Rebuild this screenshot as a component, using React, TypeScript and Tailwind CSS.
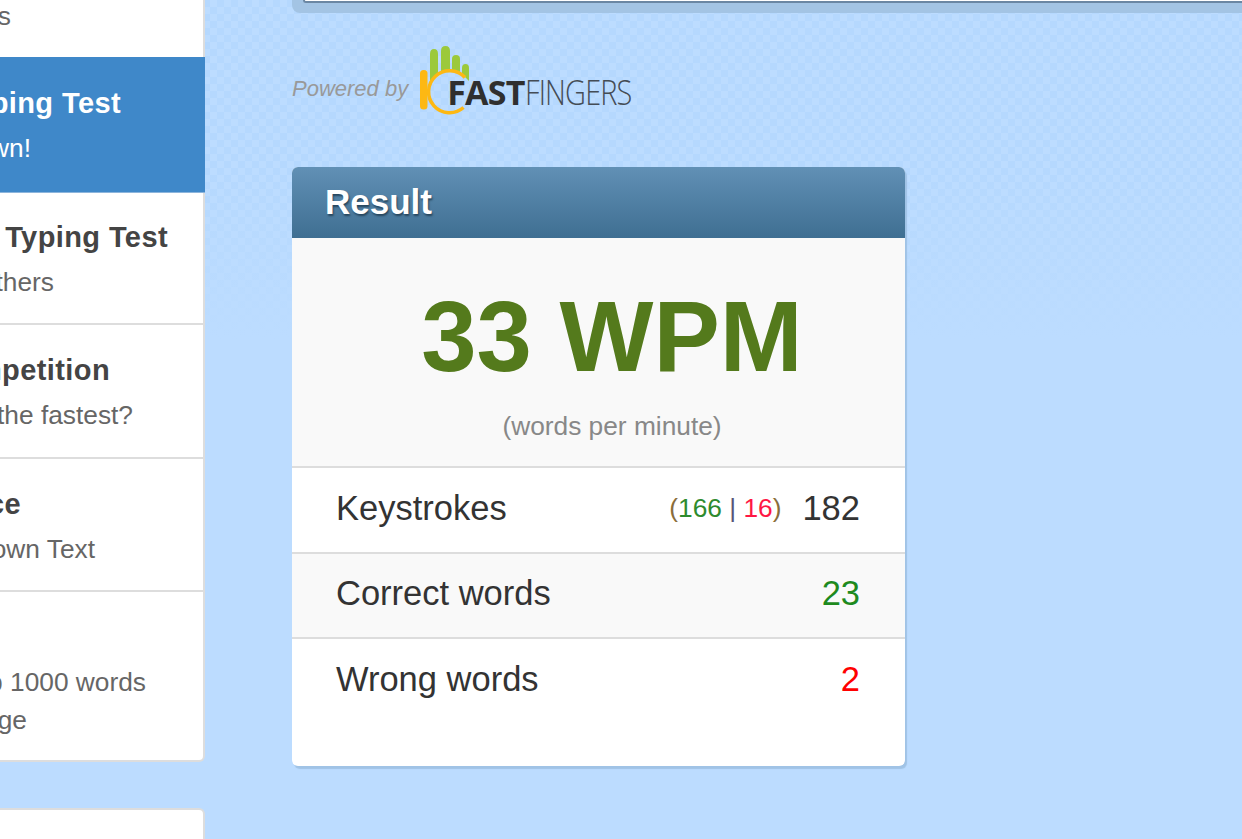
const sans = "font-['Liberation_Sans',Arial,sans-serif]";

// the page is scrolled sideways: widths below are where each line ends, the rest runs off the left edge
const menu = [
  { title: "Typing Test", titleEnd: "w-[121px]", sub: "Test yourself. Slow down!", subEnd: "w-[31px]", box: "h-[136px] pt-[28px]", active: true },
  { title: "Multiplayer Typing Test", titleEnd: "w-[168px]", sub: "Compete against others", subEnd: "w-[54px]", box: "h-[132px] pt-[26px]" },
  { title: "Competition", titleEnd: "w-[110px]", sub: "Who is the fastest?", subEnd: "w-[133px]", box: "h-[134px] pt-[27px]" },
  { title: "Text Practice", titleEnd: "w-[21px]", sub: "Practice your own Text", subEnd: "w-[95px]", box: "h-[133px] pt-[27px]" },
];

const Line = ({ end, className, children }: { end: string; className: string; children: React.ReactNode }) => (
  <div className={`${end} flex justify-end whitespace-nowrap ${className}`}>{children}</div>
);

const Logo = () => (
  <div className="relative w-[214px] h-[72px] ml-[11px]">
    <svg width="60" height="72" viewBox="0 0 60 72" className="absolute left-0 top-0">
      <rect x="1" y="25" width="7.5" height="39.5" rx="3.5" fill="#fdb813" />
      <path d="M11 37 L11 9 Q11 4 15 4 Q19 4 19 9 L19 30 Z" fill="#9cc93b" />
      <path d="M22 28 L22 6 Q22 1 26.5 1 Q31 1 31 6 L31 25 Z" fill="#9cc93b" />
      <path d="M33 25 L33 14 Q33 10 37 10 Q41 10 41 14 L41 27 Z" fill="#9cc93b" />
      <path d="M43 29 L43 23 Q43 19 46.5 19 Q50 19 50 23 L50 36 Z" fill="#9cc93b" />
      <path d="M44.5 62.5 A21 21 0 1 1 46 32.5" fill="none" stroke="#fdb813" strokeWidth="3.5" />
    </svg>
    <span className="absolute left-[28px] top-[27px] font-['Open_Sans',sans-serif] text-[34px] leading-[40px] whitespace-nowrap flex">
      <span className="font-bold tracking-[-0.75px] text-[#2f2f2f]">FAST</span>
      <span className="inline-block origin-left scale-x-[0.85] font-light tracking-[-1px] text-[#444c55]">FINGERS</span>
    </span>
  </div>
);

const Row = ({ label, shaded, children }: { label: string; shaded?: boolean; children: React.ReactNode }) => (
  <div className={`h-[85.5px] flex items-center justify-between pl-[44px] pr-[45px] pb-[2px] border-t-2 border-[#dddddd] text-[34.5px] text-[#333333] ${shaded ? "bg-[#f9f9f9]" : "bg-white"}`}>
    <span>{label}</span>
    {children}
  </div>
);

const App = () => {
  return (
    <div className={`h-[839px] w-[1242px] overflow-hidden flex bg-[#bcdcff] bg-[linear-gradient(to_bottom,transparent_170px,#bcdcff_340px),repeating-conic-gradient(#b5d8fe_0_25%,#bcdcff_0_50%)] bg-[length:100%_100%,14px_14px] ${sans}`}>
      <div className="w-[205px] shrink-0 -mt-[20px] flex flex-col gap-[46px]">
        <div className="bg-white border-r-2 border-b-2 border-[#dddddd] rounded-br-[6px]">
          <div className="h-[77px] pt-[18px]">
            <Line end="w-[11px]" className="text-[26.3px] leading-[36px] text-[#666666]">words</Line>
          </div>
          {menu.map((m) => (
            <div
              key={m.title}
              className={`${m.box} ${m.active ? "bg-[#3f88c9] text-white border-b border-[#8db5dc] -mr-[2px]" : "border-b-2 border-[#dddddd] text-[#666666]"}`}
            >
              <Line end={m.titleEnd} className={`text-[29px] leading-[36px] font-bold tracking-[0.4px] ${m.active ? "" : "text-[#444444]"}`}>{m.title}</Line>
              <Line end={m.subEnd} className="mt-[9px] text-[26.3px] leading-[36px]">{m.sub}</Line>
            </div>
          ))}
          <div className="h-[168px] pt-[71px] text-[#666666] text-[26.3px] leading-[38px]">
            <Line end="w-[146px]" className="">Learn the top 1000 words</Line>
            <Line end="w-[27px]" className="">of your language</Line>
          </div>
        </div>
        <div className="h-[60px] bg-white border-r-2 border-t-2 border-[#dddddd] rounded-tr-[6px]" />
      </div>

      <div className="ml-[87px] flex-1 min-w-0 flex flex-col">
        <div className="h-[13px] bg-[#a3c4e4] rounded-bl-[8px] pl-[11px] -mr-[20px]">
          <div className="h-[3px] bg-white border-b-2 border-l-2 border-[#6b87a3] rounded-bl-[3px]" />
        </div>
        <div className="h-[154px] pt-[32px] flex items-start">
          <span className="mt-[32px] italic text-[22px] leading-[24px] text-[#999999] whitespace-nowrap">Powered by</span>
          <Logo />
        </div>
        <div className="w-[613px] h-[599px] rounded-[6px] shadow-[2px_3px_1px_#a0c3e6] overflow-hidden bg-white">
          <div className="h-[71px] pl-[33px] flex items-center bg-gradient-to-b from-[#6190b5] to-[#3f6f92] text-white font-bold text-[35px] [text-shadow:1px_2px_2px_#27465d]">
            Result
          </div>
          <div className="h-[228px] bg-[#f9f9f9] flex flex-col items-center pt-[41px] pl-[27px]">
            <div className="font-bold text-[99.5px] leading-[116px] text-[#547a1c]">33 WPM</div>
            <div className="mt-[15px] text-[26.3px] leading-[32px] text-[#888888]">(words per minute)</div>
          </div>
          <Row label="Keystrokes">
            <span className="flex items-center gap-[21px]">
              <span className="text-[26.3px] text-[#8a6d3b]">
                (<span className="text-[#2e8b2e]">166</span> <span className="text-[#555577]">|</span> <span className="text-[#ff1744]">16</span>)
              </span>
              <span>182</span>
            </span>
          </Row>
          <Row label="Correct words" shaded>
            <span className="text-[#1e8a1e]">23</span>
          </Row>
          <Row label="Wrong words">
            <span className="text-[#ff0000]">2</span>
          </Row>
        </div>
      </div>
    </div>
  );
};

export default App;
